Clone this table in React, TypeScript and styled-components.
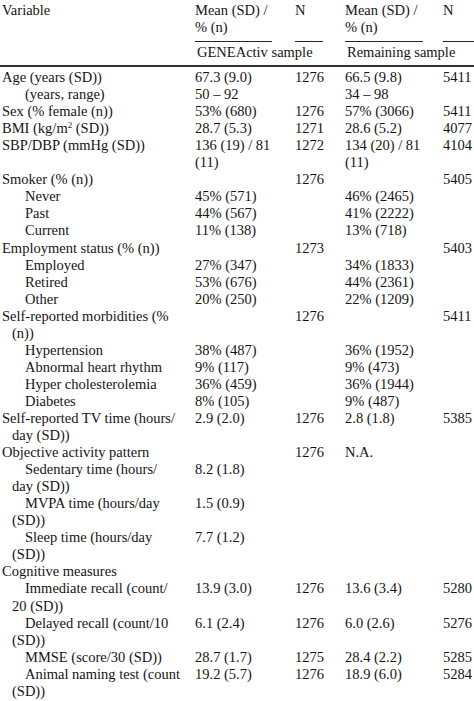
import React from "react";
import styled, { createGlobalStyle } from "styled-components";

const Global = createGlobalStyle`
  html, body {
    margin: 0;
    padding: 0;
    background: #ffffff;
    overflow: hidden;
  }
  body {
    font-family: "Liberation Serif", "Times New Roman", serif;
    color: #151515;
  }
`;

const COLS = "195px 100px 50px 98px 1fr";

const Table = styled.div`
  width: 474px;
  font-size: 14.5px;
  line-height: 17.05px;
  white-space: nowrap;
  overflow: hidden;
`;

const HeaderRow = styled.div`
  display: grid;
  grid-template-columns: ${COLS};
  padding-top: 2px;
  line-height: 16.5px;
`;

const RuleRow = styled.div`
  display: grid;
  grid-template-columns: ${COLS};
  margin-top: 6px;
`;

const SubHeaderRow = styled.div`
  display: grid;
  grid-template-columns: ${COLS};
  padding-top: 2px;
`;

const SpanCell = styled.div<{ $start: number }>`
  grid-column: ${(p) => p.$start} / span 2;
  padding-left: 2px;
`;

const Rule = styled.div<{ $w: number }>`
  width: ${(p) => p.$w}px;
  height: 1px;
  background: #262626;
`;

const ThickRule = styled.div`
  margin-top: 4px;
  margin-bottom: 2px;
  height: 2px;
  background: #303030;
`;

const Row = styled.div`
  display: grid;
  grid-template-columns: ${COLS};
`;

const VarCell = styled.div<{ $sub?: boolean }>`
  padding-left: 12px;
  text-indent: ${(p) => (p.$sub ? "13px" : "-10px")};
`;

const Cell = styled.div``;

const Sup = styled.sup`
  font-size: 9px;
  line-height: 0;
  vertical-align: 5px;
`;

type R = {
  v: React.ReactNode;
  sub?: boolean;
  m1?: React.ReactNode;
  n1?: string;
  m2?: React.ReactNode;
  n2?: string;
};

const rows: R[] = [
  { v: "Age (years (SD))", m1: "67.3 (9.0)", n1: "1276", m2: "66.5 (9.8)", n2: "5411" },
  { v: "(years, range)", sub: true, m1: "50 – 92", m2: "34 – 98" },
  { v: "Sex (% female (n))", m1: "53% (680)", n1: "1276", m2: "57% (3066)", n2: "5411" },
  {
    v: (
      <>
        BMI (kg/m<Sup>2</Sup> (SD))
      </>
    ),
    m1: "28.7 (5.3)",
    n1: "1271",
    m2: "28.6 (5.2)",
    n2: "4077",
  },
  {
    v: "SBP/DBP (mmHg (SD))",
    m1: (
      <>
        136 (19) / 81
        <br />
        (11)
      </>
    ),
    n1: "1272",
    m2: (
      <>
        134 (20) / 81
        <br />
        (11)
      </>
    ),
    n2: "4104",
  },
  { v: "Smoker (% (n))", n1: "1276", n2: "5405" },
  { v: "Never", sub: true, m1: "45% (571)", m2: "46% (2465)" },
  { v: "Past", sub: true, m1: "44% (567)", m2: "41% (2222)" },
  { v: "Current", sub: true, m1: "11% (138)", m2: "13% (718)" },
  { v: "Employment status (% (n))", n1: "1273", n2: "5403" },
  { v: "Employed", sub: true, m1: "27% (347)", m2: "34% (1833)" },
  { v: "Retired", sub: true, m1: "53% (676)", m2: "44% (2361)" },
  { v: "Other", sub: true, m1: "20% (250)", m2: "22% (1209)" },
  {
    v: (
      <>
        Self-reported morbidities (%
        <br />
        (n))
      </>
    ),
    n1: "1276",
    n2: "5411",
  },
  { v: "Hypertension", sub: true, m1: "38% (487)", m2: "36% (1952)" },
  { v: "Abnormal heart rhythm", sub: true, m1: "9% (117)", m2: "9% (473)" },
  { v: "Hyper cholesterolemia", sub: true, m1: "36% (459)", m2: "36% (1944)" },
  { v: "Diabetes", sub: true, m1: "8% (105)", m2: "9% (487)" },
  {
    v: (
      <>
        Self-reported TV time (hours/
        <br />
        day (SD))
      </>
    ),
    m1: "2.9 (2.0)",
    n1: "1276",
    m2: "2.8 (1.8)",
    n2: "5385",
  },
  { v: "Objective activity pattern", n1: "1276", m2: "N.A." },
  {
    v: (
      <>
        Sedentary time (hours/
        <br />
        day (SD))
      </>
    ),
    sub: true,
    m1: "8.2 (1.8)",
  },
  {
    v: (
      <>
        MVPA time (hours/day
        <br />
        (SD))
      </>
    ),
    sub: true,
    m1: "1.5 (0.9)",
  },
  {
    v: (
      <>
        Sleep time (hours/day
        <br />
        (SD))
      </>
    ),
    sub: true,
    m1: "7.7 (1.2)",
  },
  { v: "Cognitive measures" },
  {
    v: (
      <>
        Immediate recall (count/
        <br />
        20 (SD))
      </>
    ),
    sub: true,
    m1: "13.9 (3.0)",
    n1: "1276",
    m2: "13.6 (3.4)",
    n2: "5280",
  },
  {
    v: (
      <>
        Delayed recall (count/10
        <br />
        (SD))
      </>
    ),
    sub: true,
    m1: "6.1 (2.4)",
    n1: "1276",
    m2: "6.0 (2.6)",
    n2: "5276",
  },
  {
    v: "MMSE (score/30 (SD))",
    sub: true,
    m1: "28.7 (1.7)",
    n1: "1275",
    m2: "28.4 (2.2)",
    n2: "5285",
  },
  {
    v: (
      <>
        Animal naming test (count
        <br />
        (SD))
      </>
    ),
    sub: true,
    m1: "19.2 (5.7)",
    n1: "1276",
    m2: "18.9 (6.0)",
    n2: "5284",
  },
];

export default function App() {
  return (
    <>
      <Global />
      <Table>
        <HeaderRow>
          <VarCell>Variable</VarCell>
          <Cell>
            Mean (SD) /
            <br />% (n)
          </Cell>
          <Cell>N</Cell>
          <Cell>
            Mean (SD) /
            <br />% (n)
          </Cell>
          <Cell>N</Cell>
        </HeaderRow>
        <RuleRow>
          <div />
          <Rule $w={77} />
          <Rule $w={28} />
          <Rule $w={78} />
          <Rule $w={40} />
        </RuleRow>
        <SubHeaderRow>
          <SpanCell $start={2}>GENEActiv sample</SpanCell>
          <SpanCell $start={4}>Remaining sample</SpanCell>
        </SubHeaderRow>
        <ThickRule />
        {rows.map((r, i) => (
          <Row key={i}>
            <VarCell $sub={r.sub}>{r.v}</VarCell>
            <Cell>{r.m1}</Cell>
            <Cell>{r.n1}</Cell>
            <Cell>{r.m2}</Cell>
            <Cell>{r.n2}</Cell>
          </Row>
        ))}
      </Table>
    </>
  );
}
